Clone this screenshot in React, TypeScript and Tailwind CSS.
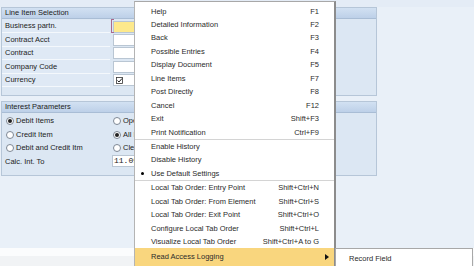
import React from "react";

const menu1: [string, string][] = [
  ["Help", "F1"],
  ["Detailed Information", "F2"],
  ["Back", "F3"],
  ["Possible Entries", "F4"],
  ["Display Document", "F5"],
  ["Line Items", "F7"],
  ["Post Directly", "F8"],
  ["Cancel", "F12"],
  ["Exit", "Shift+F3"],
  ["Print Notification", "Ctrl+F9"],
];
const menu2: string[] = ["Enable History", "Disable History", "Use Default Settings"];
const menu3: [string, string][] = [
  ["Local Tab Order: Entry Point", "Shift+Ctrl+N"],
  ["Local Tab Order: From Element", "Shift+Ctrl+S"],
  ["Local Tab Order: Exit Point", "Shift+Ctrl+O"],
  ["Configure Local Tab Order", "Shift+Ctrl+L"],
  ["Visualize Local Tab Order", "Shift+Ctrl+A to G"],
];

function Item({ label, sc, bullet }: { label: string; sc?: string; bullet?: boolean }) {
  return (
    <div className="relative flex h-[13.45px] items-center justify-between pl-[16px] pr-[15px]">
      {bullet && <span className="absolute left-[6px] top-[5px] h-[3px] w-[3px] rounded-full bg-black" />}
      <span>{label}</span>
      {sc && <span>{sc}</span>}
    </div>
  );
}

function Row1({ label, children }: { label: string; children?: React.ReactNode }) {
  return (
    <div className="flex h-[13.4px] items-stretch">
      <div className="flex w-[108px] items-center border-b border-[#f4f8fc] bg-[#dfe9f5] pl-[3px]">{label}</div>
      <div className="relative ml-[3px] flex items-center">{children}</div>
    </div>
  );
}

function Field({ yellow, children }: { yellow?: boolean; children?: React.ReactNode }) {
  return (
    <div
      className={`flex h-[12px] w-[30px] items-center border border-[#b9c6d3] pl-[1px] ${
        yellow ? "bg-[#fde98c]" : "bg-white"
      }`}
    >
      {children}
    </div>
  );
}

function Radio({ on }: { on?: boolean }) {
  return (
    <span className="flex h-[8px] w-[8px] shrink-0 items-center justify-center rounded-full border border-[#7d8794] bg-white">
      {on && <span className="h-[4px] w-[4px] rounded-full bg-[#222]" />}
    </span>
  );
}

function RadioRow({ a, b, aOn, bOn }: { a: string; b: string; aOn?: boolean; bOn?: boolean }) {
  return (
    <div className="flex h-[13.4px] items-center">
      <div className="flex w-[108px] items-center gap-[2px] pl-[4px]">
        <Radio on={aOn} />
        <span>{a}</span>
      </div>
      <div className="ml-[3px] flex w-[22px] items-center gap-[2px] overflow-hidden whitespace-nowrap">
        <Radio on={bOn} />
        <span>{b}</span>
      </div>
    </div>
  );
}

export default function App() {
  return (
    <div className="relative h-[266px] w-[474px] overflow-hidden bg-[#e9f0f8] font-['Liberation_Sans',Arial,sans-serif] text-[7.5px] leading-none text-[#222]">
      <div className="flex h-full flex-col">
        <div className="h-[7px] shrink-0 bg-[#e4ecf6]" />
        <div className="flex w-[377px] shrink-0 flex-col gap-[5px] pl-[1px]">
          <div className="flex h-[89px] flex-col border border-[#b6c6d8] bg-[#dce7f3]">
            <div className="flex h-[11px] shrink-0 items-center border-b border-[#a9bdd5] bg-gradient-to-b from-[#d2e1f2] to-[#bdd0e8] pl-[3px]">
              Line Item Selection
            </div>
            <div className="h-[1px]" />
            <Row1 label="Business partn.">
              <Field yellow />
              <div className="absolute left-[-2px] top-[-1px] h-[14px] w-[3px] border-y border-l border-[#a9698c]" />
            </Row1>
            <Row1 label="Contract Acct">
              <Field />
            </Row1>
            <Row1 label="Contract">
              <Field />
            </Row1>
            <Row1 label="Company Code">
              <Field />
            </Row1>
            <Row1 label="Currency">
              <Field>
                <svg width="7" height="7" viewBox="0 0 7 7" className="ml-[1px]">
                  <rect x="0.5" y="0.5" width="6" height="6" fill="white" stroke="#333" strokeWidth="0.8" />
                  <path d="M1.5 3.5 L3 5 L6 1.5" fill="none" stroke="#222" strokeWidth="1" />
                </svg>
              </Field>
            </Row1>
          </div>
          <div className="flex h-[75px] flex-col border border-[#b6c6d8] bg-[#dce7f3]">
            <div className="flex h-[11px] shrink-0 items-center border-b border-[#a9bdd5] bg-gradient-to-b from-[#d2e1f2] to-[#bdd0e8] pl-[3px]">
              Interest Parameters
            </div>
            <div className="h-[1.5px]" />
            <RadioRow a="Debit Items" b="Open Items" aOn />
            <RadioRow a="Credit Item" b="All Items" bOn />
            <RadioRow a="Debit and Credit Itm" b="Cleared Items" />
            <div className="flex h-[13.4px] items-center">
              <div className="w-[108px] pl-[3px]">Calc. Int. To</div>
              <div className="ml-[2px] flex h-[12px] w-[30px] items-center overflow-hidden whitespace-nowrap border border-[#b9c6d3] bg-white pl-[1px] font-['Liberation_Mono',monospace] text-[8px]">
                11.09
              </div>
            </div>
          </div>
        </div>
        <div className="flex-1" />
        <div className="h-[8px] shrink-0 bg-[#fbfcfd]" />
        <div className="h-[10px] shrink-0 bg-[#f1f3f5]" />
      </div>

      {/* context menu */}
      <div className="absolute left-[134px] top-[1px] w-[202px] border-l border-t border-r-2 border-l-[#b4b4b4] border-t-[#a8a8a8] border-r-[#8c8c8c] bg-white pt-[2.6px] text-[#2b2b2b]">
        {menu1.map(([l, s]) => (
          <Item key={l} label={l} sc={s} />
        ))}
        <div className="h-px bg-[#d4d4d4]" />
        {menu2.map((l) => (
          <Item key={l} label={l} bullet={l === "Use Default Settings"} />
        ))}
        <div className="h-px bg-[#d4d4d4]" />
        {menu3.map(([l, s]) => (
          <Item key={l} label={l} sc={s} />
        ))}
        <div className="relative flex h-[20px] items-start bg-[#f9d67e] pl-[16px] pt-[5px]">
          <span>Read Access Logging</span>
          <svg width="4" height="6" viewBox="0 0 4 6" className="absolute left-[190px] top-[6px]">
            <path d="M0 0 L4 3 L0 6 Z" fill="#111" />
          </svg>
        </div>
      </div>

      {/* submenu */}
      <div className="absolute left-[335px] top-[248px] h-[24px] w-[138px] border border-[#a8a8a8] bg-white pl-[13px] pt-[6px] text-[#2b2b2b]">
        Record Field
      </div>
    </div>
  );
}
